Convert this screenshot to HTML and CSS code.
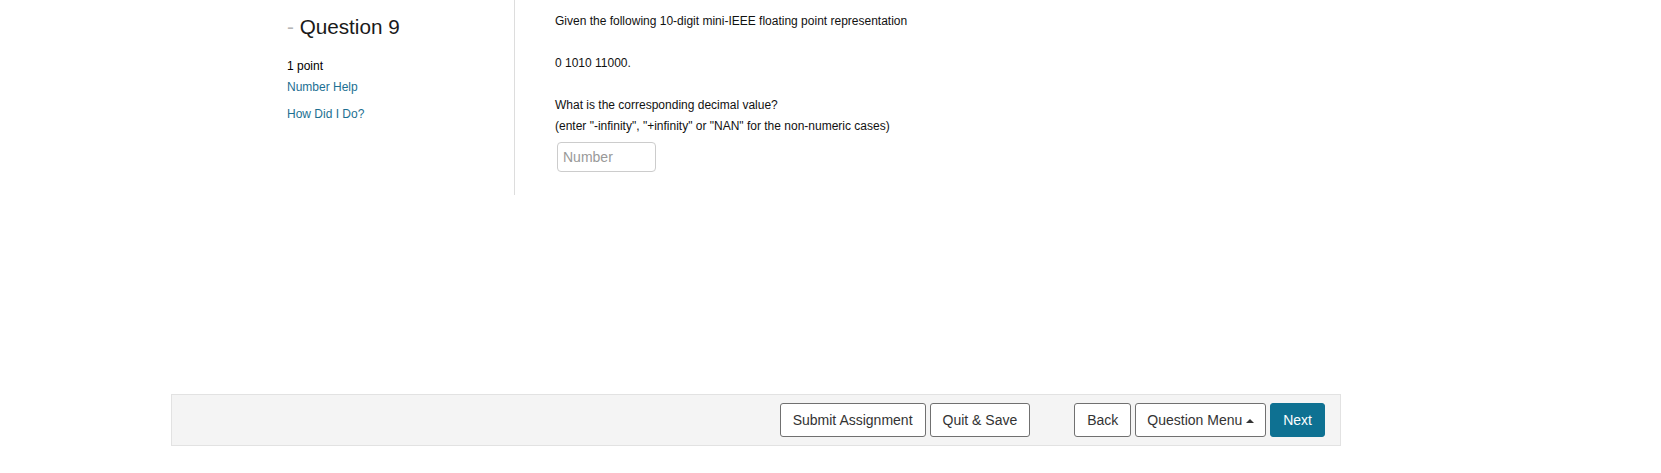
FILE: index.html
```html
<!doctype html>
<html lang="en">
  <head>
    <meta charset="UTF-8" />
    <meta name="viewport" content="width=device-width, initial-scale=1.0" />
    <title>Question 9</title>
    <link rel="stylesheet" href="styles.css">
  </head>
  <body>
    <div class="page">
      <div class="question">
        <div class="q-side">
          <h2 class="q-title"><span class="q-toggle">-</span> Question 9</h2>
          <div class="q-points">1 point</div>
          <a class="q-link" href="#">Number Help</a>
          <a class="q-link q-link-gap" href="#">How Did I Do?</a>
        </div>
        <div class="q-body">
          <p>Given the following 10-digit mini-IEEE floating point representation</p>
          <p>0 1010 11000.</p>
          <p class="q-ask">What is the corresponding decimal value?<br>(enter "-infinity", "+infinity" or "NAN" for the non-numeric cases)</p>
          <input class="q-answer" type="text" placeholder="Number" />
        </div>
      </div>

      <div class="footer-bar">
        <div class="btn-group">
          <button class="btn">Submit Assignment</button>
          <button class="btn">Quit &amp; Save</button>
        </div>
        <div class="btn-group">
          <button class="btn">Back</button>
          <button class="btn btn-menu">Question Menu <span class="caret"></span></button>
          <button class="btn btn-primary">Next</button>
        </div>
      </div>
    </div>
  </body>
</html>
```

FILE: styles.css
```css
body {
  margin: 0;
  font-family: "Liberation Sans", Arial, sans-serif;
  color: #111;
  background-color: #fff;
}
.page {
  margin-left: 171px;
  width: 1170px;
}
.question {
  display: flex;
  padding-left: 116px;
}
.q-side {
  width: 227px;
  border-right: 1px solid #ddd;
  font-size: 12px;
}
.q-title {
  margin: 15px 0 0;
  font-size: 20.7px;
  line-height: 24px;
  font-weight: normal;
  color: #1a1a1a;
}
.q-toggle {
  color: #b5b5b5;
}
.q-points {
  margin-top: 16.5px;
  line-height: 21px;
  color: #000;
}
.q-link {
  display: block;
  line-height: 21px;
  color: #1c6f92;
  text-decoration: none;
}
.q-link-gap {
  margin-top: 6px;
}
.q-body {
  padding: 10.5px 0 23px 40px;
  font-size: 12px;
  line-height: 21px;
}
.q-body p {
  margin: 0 0 21px;
}
.q-body .q-ask {
  margin-bottom: 5.5px;
}
.q-answer {
  display: block;
  box-sizing: border-box;
  width: 99px;
  height: 30px;
  margin-left: 2px;
  padding: 0 5px;
  border: 1px solid #ccc;
  border-radius: 4px;
  font-family: inherit;
  font-size: 14px;
  color: #333;
}
.q-answer::placeholder {
  color: #999;
}
.footer-bar {
  display: flex;
  justify-content: flex-end;
  gap: 44px;
  margin-top: 199px;
  padding: 8px 15px 8px 0;
  background-color: #f4f4f4;
  border: 1px solid #e2e2e2;
}
.btn-group {
  display: flex;
  gap: 4px;
}
.btn {
  height: 34px;
  padding: 0 12px;
  border: 1px solid #707070;
  border-radius: 3px;
  background-color: #fff;
  color: #333;
  font-family: inherit;
  font-size: 14px;
  cursor: pointer;
}
.btn-menu {
  padding: 0 11px;
}
.caret {
  display: inline-block;
  width: 0;
  height: 0;
  vertical-align: 2px;
  border-left: 4px solid transparent;
  border-right: 4px solid transparent;
  border-bottom: 4px solid #333;
}
.btn-primary {
  background-color: #0e7192;
  border-color: #0e7192;
  color: #fff;
}
```
